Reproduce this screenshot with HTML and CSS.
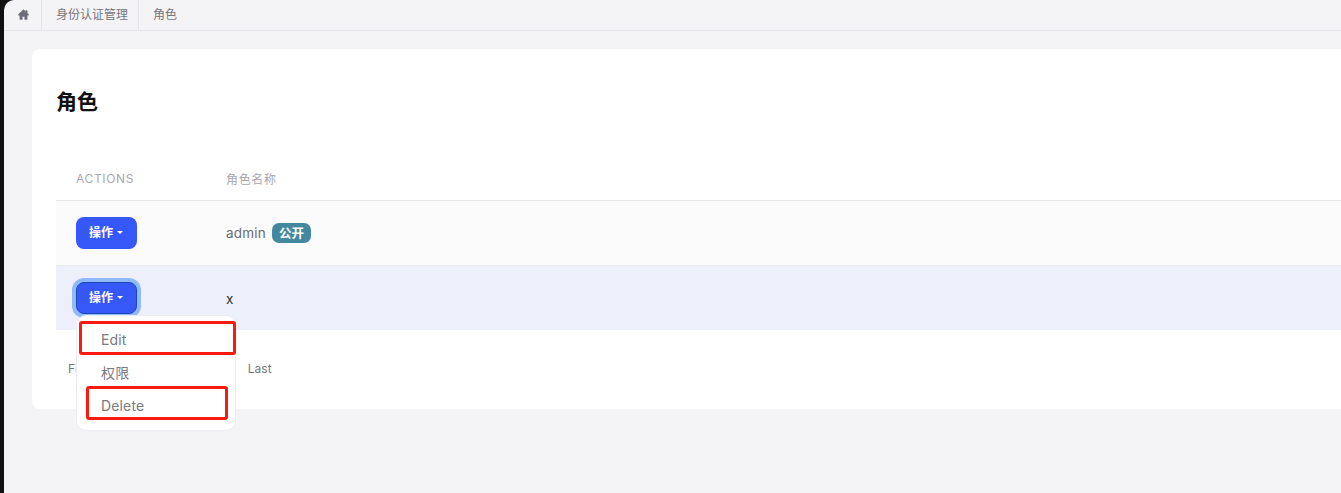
FILE: index.html
```html
<!DOCTYPE html>
<html lang="zh">
<head>
<meta charset="utf-8">
<title>角色</title>
<link rel="stylesheet" href="styles.css">
</head>
<body>
<div class="app">
  <nav class="crumbs">
    <a class="crumb home"><svg viewBox="0 0 16 16" width="13" height="13"><path fill="#6e6e78" stroke="#6e6e78" stroke-width=".6" stroke-linejoin="round" d="M8 2 2 7.400V9h1.500v5h3V10.500h3V14h3V9H14V7.400l-1.500-1.350V3h-1.600v1.600z"/></svg></a>
    <a class="crumb">身份认证管理</a>
    <a class="crumb">角色</a>
  </nav>
  <main class="content">
    <section class="card">
      <h1 class="title">角色</h1>
      <div class="table">
        <div class="row head">
          <div class="cell c-act">ACTIONS</div>
          <div class="cell c-name">角色名称</div>
        </div>
        <div class="row odd">
          <div class="cell c-act"><button class="btn">操作<i class="caret"></i></button></div>
          <div class="cell c-name">admin <span class="badge">公开</span></div>
        </div>
        <div class="row hover">
          <div class="cell c-act"><button class="btn focus">操作<i class="caret"></i></button></div>
          <div class="cell c-name x">x</div>
        </div>
      </div>
      <div class="pager"><span>First</span><span class="last">Last</span></div>
      <ul class="menu">
        <li>Edit</li>
        <li>权限</li>
        <li>Delete</li>
      </ul>
      <div class="mark mark-edit"></div>
      <div class="mark mark-delete"></div>
    </section>
  </main>
</div>
</body>
</html>
```
FILE: styles.css
```css
* { box-sizing: border-box; }
html, body { margin: 0; padding: 0; height: 100%; overflow: hidden; background: #111; }
body { font-family: Inter, "Noto Sans CJK SC", sans-serif; }
.app { margin-left: 4px; height: 493px; background: #f4f4f6; border-top-left-radius: 10px; overflow: hidden; }
.crumbs { display: flex; height: 31px; border-bottom: 1px solid #e6e6ea; align-items: stretch; }
.crumb { display: flex; align-items: center; font-size: 12px; color: #74747c; padding: 0 10px 3px 14px; border-right: 1px solid #e6e6ea; }
.crumb:last-child { border-right: 0; }
.home { width: 38px; padding: 0 0 2px 13px; }
.content { padding: 18px 0 0 28px; }
.card { position: relative; height: 360px; background: #fff; border-radius: 8px 0 0 8px; padding: 0 0 0 24px; }
.title { margin: 0; padding-top: 37px; height: 109px; font-size: 21px; line-height: 28px; font-weight: 700; color: #111; font-family: "Noto Sans CJK SC", sans-serif; }
.row { display: flex; align-items: center; }
.head { height: 43px; padding-bottom: 2px; border-bottom: 1px solid #e8e8ea; }
.odd { height: 65px; background: #fbfbfb; border-bottom: 1px solid #e8e8ea; }
.hover { height: 64px; background: #edf0fb; }
.cell { font-size: 13.500px; letter-spacing: .2px; color: #6a6a72; }
.head .cell { font-size: 12px; letter-spacing: .65px; color: #a8a8b0; }
.c-act { width: 170px; padding-left: 20px; }
.x { color: #333; padding-top: 2px; }
.btn { display: flex; align-items: center; justify-content: center; width: 61px; height: 32px; padding: 0 1px 3px 0; border: 0; border-radius: 8px; background: #3758f9; color: #fff; font: 700 12px "Noto Sans CJK SC", sans-serif; }
.focus { border: 1px solid #1c49b8; box-shadow: 0 0 0 4px #8fb9fb; }
.caret { display: inline-block; margin: 1px 0 0 4px; border-top: 3.500px solid #fff; border-left: 3.500px solid transparent; border-right: 3.500px solid transparent; }
.badge { display: inline-block; height: 20px; line-height: 20px; padding: 0 7px; margin-left: 2px; border-radius: 7px; background: #44889f; color: #fff; font: 700 12.500px/20px "Noto Sans CJK SC", sans-serif; letter-spacing: 0; }
.pager { display: flex; padding: 312px 0 0 12px; position: absolute; top: 0; left: 24px; font-size: 12px; color: #74747c; }
.last { margin-left: 155px; }
.menu { position: absolute; left: 44px; top: 266px; width: 160px; height: 116px; margin: 0; padding: 7px 0 0; list-style: none; background: #fff; border-radius: 10px; border: 1px solid #ececf0; font-size: 14px; letter-spacing: .15px; color: #7a7a80; }
.menu li { height: 33px; line-height: 33px; padding-left: 24px; }
.mark { position: absolute; border: 3px solid #fb1a10; border-radius: 3px; }
.mark-edit { left: 47px; top: 272px; width: 157px; height: 34px; }
.mark-delete { left: 54px; top: 337px; width: 142px; height: 34px; }
```
